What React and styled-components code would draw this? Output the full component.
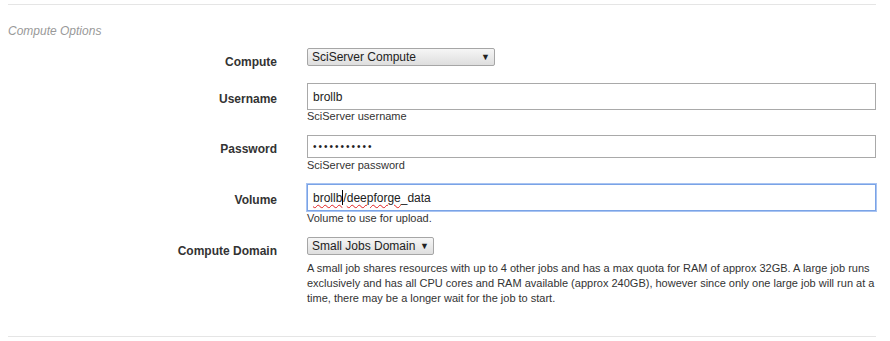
import React from "react";
import styled, { createGlobalStyle } from "styled-components";

const GlobalStyle = createGlobalStyle`
  body {
    margin: 0;
    background: #fff;
    font-family: "Liberation Sans", Arial, sans-serif;
    color: #333;
  }
`;

const Page = styled.div`
  padding: 4px 14px 0 8px;
`;

const Rule = styled.div`
  height: 1px;
  background: #e5e5e5;
`;

const Legend = styled.div`
  font-size: 12px;
  font-style: italic;
  color: #999;
  line-height: 14px;
  margin: 19px 0 10px;
`;

const Form = styled.div`
  display: flex;
  flex-direction: column;
  gap: 12px;
  padding-bottom: 30px;
`;

const Row = styled.div`
  display: grid;
  grid-template-columns: 269px 1fr;
  column-gap: 30px;
  align-items: start;
`;

const Label = styled.label`
  text-align: right;
  font-size: 12px;
  font-weight: bold;
  color: #333;
  line-height: 18px;
  padding: ${(p) => (p.$tall ? "7px 0 0" : "5px 0 0")};
`;

const Control = styled.div`
  display: flex;
  flex-direction: column;
  align-items: flex-start;
`;

const SelectBox = styled.div`
  box-sizing: border-box;
  width: ${(p) => p.$width}px;
  height: 18px;
  display: flex;
  align-items: center;
  justify-content: space-between;
  padding: 0 4px;
  border: 1px solid #a6a6a6;
  border-radius: 2px;
  background: linear-gradient(#f6f6f6, #dedede);
  font-size: 12px;
  color: #222;
  white-space: nowrap;
`;

const Arrow = styled.span`
  font-size: 9px;
  color: #222;
  margin-left: 4px;
`;

const Input = styled.input`
  box-sizing: border-box;
  width: 100%;
  height: ${(p) => p.$height || 27}px;
  border: 1px solid #a9a9a9;
  padding: 0 5px;
  font-family: "Liberation Sans", Arial, sans-serif;
  font-size: ${(p) => (p.type === "password" ? "10px" : "12px")};
  letter-spacing: ${(p) => (p.type === "password" ? "2px" : "normal")};
  color: #222;
  background: #fff;
  outline: none;
  margin: 0;
`;

const FocusedField = styled.div`
  box-sizing: border-box;
  width: 100%;
  height: 27px;
  border: 1px solid #7aa3e6;
  box-shadow: 0 0 0 1px #a9c4f2;
  display: flex;
  align-items: center;
  padding: 0 5px;
  font-size: 12px;
  color: #222;
`;

const Misspelled = styled.span`
  text-decoration: underline wavy #e02020;
  text-decoration-thickness: 1px;
  text-underline-offset: 2px;
`;

const Caret = styled.span`
  display: inline-block;
  width: 1px;
  height: 15px;
  background: #000;
  vertical-align: middle;
`;

const Help = styled.div`
  font-size: 11px;
  line-height: 13px;
  color: #333;
  margin-top: ${(p) => p.$top || 0}px;
`;

const Description = styled.p`
  font-size: 11px;
  line-height: 15px;
  color: #333;
  margin: 6px 0 0;
`;

export default function App() {
  return (
    <Page>
      <GlobalStyle />
      <Rule />
      <Legend>Compute Options</Legend>
      <Form>
        <Row>
          <Label>Compute</Label>
          <Control>
            <SelectBox $width={188}>
              <span>SciServer Compute</span>
              <Arrow>▼</Arrow>
            </SelectBox>
          </Control>
        </Row>
        <Row>
          <Label $tall>Username</Label>
          <Control>
            <Input type="text" value="brollb" readOnly />
            <Help>SciServer username</Help>
          </Control>
        </Row>
        <Row>
          <Label>Password</Label>
          <Control>
            <Input type="password" value="xxxxxxxxxxx" readOnly $height={23} />
            <Help $top={1}>SciServer password</Help>
          </Control>
        </Row>
        <Row>
          <Label $tall>Volume</Label>
          <Control>
            <FocusedField>
              <Misspelled>brollb</Misspelled>
              <Caret />
              /<Misspelled>deepforge</Misspelled>_data
            </FocusedField>
            <Help $top={1}>Volume to use for upload.</Help>
          </Control>
        </Row>
        <Row>
          <Label>Compute Domain</Label>
          <Control>
            <SelectBox $width={127}>
              <span>Small Jobs Domain</span>
              <Arrow>▼</Arrow>
            </SelectBox>
            <Description>
              A small job shares resources with up to 4 other jobs and has a max quota for RAM of
              approx 32GB. A large job runs exclusively and has all CPU cores and RAM available
              (approx 240GB), however since only one large job will run at a time, there may be a
              longer wait for the job to start.
            </Description>
          </Control>
        </Row>
      </Form>
      <Rule />
    </Page>
  );
}
